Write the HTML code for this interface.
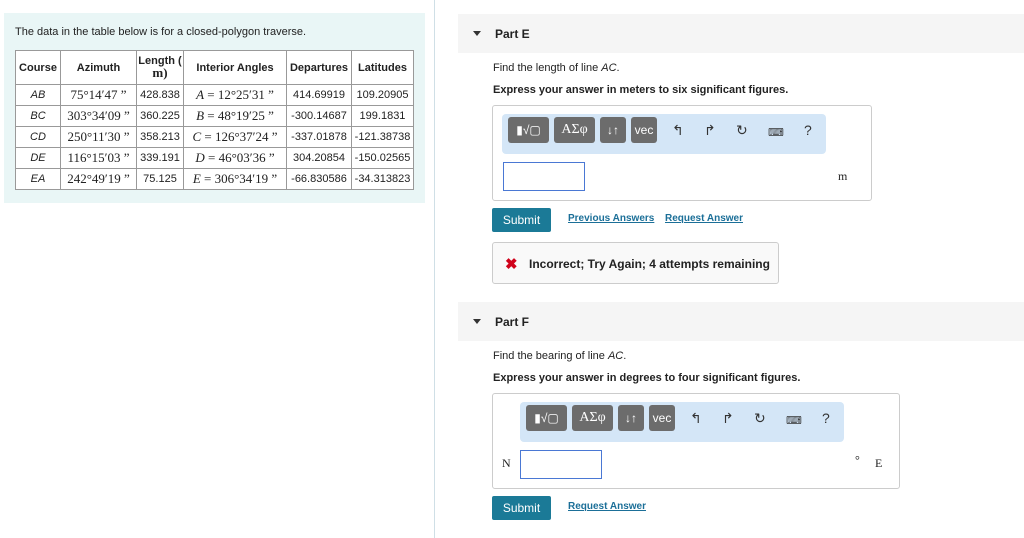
<!DOCTYPE html>
<html><head><style>
body{margin:0;width:1024px;height:538px;background:#fff;font-family:"Liberation Sans",Arial,sans-serif;position:relative;overflow:hidden;color:#222}
.abs{position:absolute}
.lp{left:4px;top:13px;width:421px;height:190px;background:#e9f6f6}
table{border-collapse:collapse;position:absolute;left:15px;top:50px;font-size:11px;background:#fff}
td,th{border:1px solid #999;padding:0;text-align:center;height:20px}
th{height:33px;font-size:11px}
.s{font-family:"Liberation Serif",serif;font-size:13px}
.vl{left:434px;top:0;width:1px;height:538px;background:#cfdfe6}
.hd{left:458px;width:566px;height:39px;background:#f5f5f5;font-size:12px;font-weight:bold}
.tri{position:absolute;left:15px;top:17px;width:0;height:0;border-left:4px solid transparent;border-right:4px solid transparent;border-top:5px solid #333}
.t{font-size:11px}
.box{border:1px solid #ccc;border-radius:3px}
.tb{background:#d4e6f7;border-radius:4px}
.btn{position:absolute;background:#6c6c6c;border-radius:3px;color:#fff;text-align:center;font-size:12px;height:26px;line-height:26px;top:3px}
.ic{position:absolute;top:8px;font-size:14px;color:#333}
.inp{border:1px solid #4a78d4;background:#fff}
.sub{background:#1b7a97;color:#fff;font-size:12px;text-align:center;line-height:24px;border-radius:2px}
.lk{color:#1b6f98;font-size:10px;font-weight:bold;text-decoration:underline}
</style></head><body>
<div class="abs lp"></div>
<div class="abs t" style="left:15px;top:26px">The data in the table below is for a closed-polygon traverse.</div>
<table>
<tr><th style="width:44px">Course</th><th style="width:75px">Azimuth</th><th style="width:46px;line-height:12px">Length (<br><span class="s">m)</span></th><th style="width:102px">Interior Angles</th><th style="width:64px">Departures</th><th style="width:61px">Latitudes</th></tr>
<tr><td><i>AB</i></td><td class="s">75°14′47 ”</td><td>428.838</td><td class="s"><i>A</i> = 12°25′31 ”</td><td>414.69919</td><td>109.20905</td></tr>
<tr><td><i>BC</i></td><td class="s">303°34′09 ”</td><td>360.225</td><td class="s"><i>B</i> = 48°19′25 ”</td><td>-300.14687</td><td>199.1831</td></tr>
<tr><td><i>CD</i></td><td class="s">250°11′30 ”</td><td>358.213</td><td class="s"><i>C</i> = 126°37′24 ”</td><td>-337.01878</td><td>-121.38738</td></tr>
<tr><td><i>DE</i></td><td class="s">116°15′03 ”</td><td>339.191</td><td class="s"><i>D</i> = 46°03′36 ”</td><td>304.20854</td><td>-150.02565</td></tr>
<tr><td><i>EA</i></td><td class="s">242°49′19 ”</td><td>75.125</td><td class="s"><i>E</i> = 306°34′19 ”</td><td>-66.830586</td><td>-34.313823</td></tr>
</table>
<div class="abs vl"></div>

<div class="abs hd" style="top:14px"><div class="tri"></div><span class="abs" style="left:37px;top:13px">Part E</span></div>
<div class="abs t" style="left:493px;top:62px">Find the length of line <i>AC</i>.</div>
<div class="abs t" style="left:493px;top:84px;font-weight:bold">Express your answer in meters to six significant figures.</div>
<div class="abs box" style="left:492px;top:105px;width:378px;height:94px"></div>
<div class="abs tb" style="left:502px;top:114px;width:324px;height:40px">
<div class="btn" style="left:6px;width:41px">▮√▢</div>
<div class="btn" style="left:52px;width:41px;font-family:'Liberation Serif',serif;font-size:14px">ΑΣφ</div>
<div class="btn" style="left:98px;width:26px">↓↑</div>
<div class="btn" style="left:129px;width:26px">vec</div>
<div class="ic" style="left:170px">↰</div><div class="ic" style="left:202px">↱</div><div class="ic" style="left:234px">↻</div><div class="ic" style="left:266px;font-size:11px;top:12px">⌨</div><div class="ic" style="left:302px">?</div>
</div>
<div class="abs inp" style="left:503px;top:162px;width:80px;height:27px"></div>
<div class="abs s" style="left:838px;top:169px;font-size:12px">m</div>
<div class="abs sub" style="left:492px;top:208px;width:59px;height:24px">Submit</div>
<div class="abs lk" style="left:568px;top:213px">Previous Answers</div>
<div class="abs lk" style="left:665px;top:213px">Request Answer</div>
<div class="abs box" style="left:492px;top:242px;width:285px;height:40px;background:#f9f9f9"><span class="abs" style="left:12px;top:12px;color:#d0021b;font-weight:bold;font-size:15px">✖</span><span class="abs" style="left:36px;top:14px;font-size:12px;font-weight:bold">Incorrect; Try Again; 4 attempts remaining</span></div>

<div class="abs hd" style="top:302px"><div class="tri"></div><span class="abs" style="left:37px;top:13px">Part F</span></div>
<div class="abs t" style="left:493px;top:350px">Find the bearing of line <i>AC</i>.</div>
<div class="abs t" style="left:493px;top:372px;font-weight:bold">Express your answer in degrees to four significant figures.</div>
<div class="abs box" style="left:492px;top:393px;width:406px;height:94px"></div>
<div class="abs tb" style="left:520px;top:402px;width:324px;height:40px">
<div class="btn" style="left:6px;width:41px">▮√▢</div>
<div class="btn" style="left:52px;width:41px;font-family:'Liberation Serif',serif;font-size:14px">ΑΣφ</div>
<div class="btn" style="left:98px;width:26px">↓↑</div>
<div class="btn" style="left:129px;width:26px">vec</div>
<div class="ic" style="left:170px">↰</div><div class="ic" style="left:202px">↱</div><div class="ic" style="left:234px">↻</div><div class="ic" style="left:266px;font-size:11px;top:12px">⌨</div><div class="ic" style="left:302px">?</div>
</div>
<div class="abs s" style="left:502px;top:456px;font-size:12px">N</div>
<div class="abs inp" style="left:520px;top:450px;width:80px;height:27px"></div>
<div class="abs s" style="left:855px;top:453px;font-size:12px">°</div>
<div class="abs s" style="left:875px;top:456px;font-size:12px">E</div>
<div class="abs sub" style="left:492px;top:496px;width:59px;height:24px">Submit</div>
<div class="abs lk" style="left:568px;top:501px">Request Answer</div>
</body></html>
